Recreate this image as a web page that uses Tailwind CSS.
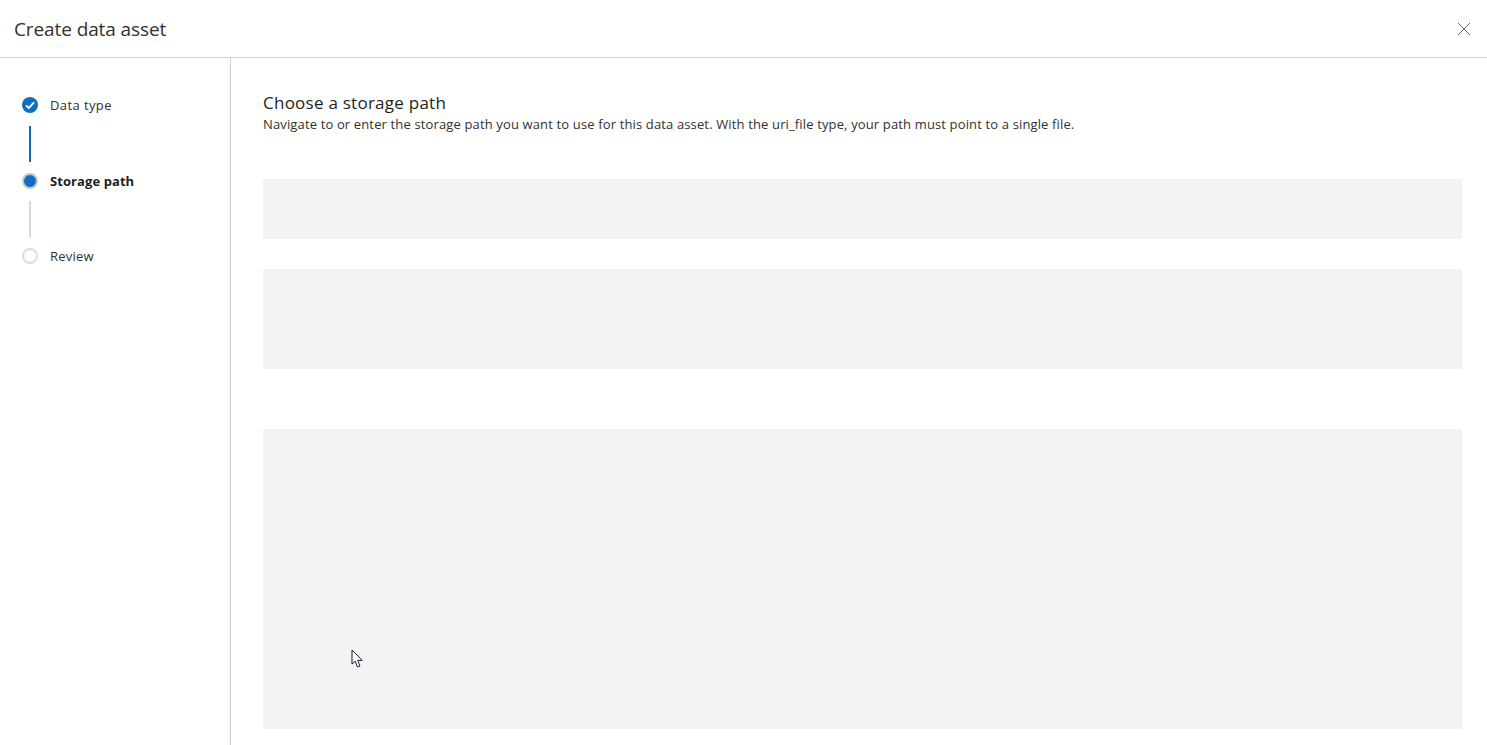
<!DOCTYPE html>
<html lang="en">
<head>
  <meta charset="UTF-8" />
  <title>Create data asset</title>
  <script src="https://cdn.jsdelivr.net/npm/@tailwindcss/browser@4"></script>
</head>
<body class="h-[745px] overflow-hidden bg-white font-['Open_Sans',sans-serif] text-[#201f1e]">

  <!-- Header -->
  <header class="h-[58px] flex items-center justify-between pl-[14px] pr-[16px] border-b border-[#d2d0ce]">
    <h1 class="text-[19px] pt-[1px] tracking-[-0.1px] text-[#323130]">Create data asset</h1>
    <svg class="w-[14px] h-[14px]" viewBox="0 0 14 14" fill="none" stroke="#605e5c" stroke-width="1">
      <path d="M1 1L13 13M13 1L1 13"/>
    </svg>
  </header>

  <div class="flex h-[687px]">
    <!-- Steps -->
    <nav class="w-[231px] shrink-0 border-r border-[#d2d0ce] pl-[22px] pt-[39px]">
      <div class="flex items-center h-[16px] gap-[12px]">
        <svg class="w-[16px] h-[16px]" viewBox="0 0 16 16">
          <circle cx="8" cy="8" r="8" fill="#106ebe"/>
          <path d="M4 8.3L6.8 11L12 5.4" fill="none" stroke="#fff" stroke-width="1.8"/>
        </svg>
        <span class="text-[13px] pt-[1px] tracking-[0.4px] text-[#323130]">Data type</span>
      </div>
      <div class="w-[2px] h-[36px] ml-[7px] mt-[13px] bg-[#106ebe]"></div>
      <div class="flex items-center h-[16px] gap-[12px] mt-[11px]">
        <span class="w-[16px] h-[16px] rounded-full bg-[#106ebe] border-2 border-[#c8c6c4]"></span>
        <span class="text-[13px] pt-[1px] font-bold tracking-[0.08px] text-[#201f1e]">Storage path</span>
      </div>
      <div class="w-[2px] h-[36px] ml-[7px] mt-[12px] bg-[#d9d8d6]"></div>
      <div class="flex items-center h-[16px] gap-[12px] mt-[11px]">
        <span class="w-[16px] h-[16px] rounded-full bg-white border-2 border-[#dedddb]"></span>
        <span class="text-[13px] pt-[1px] tracking-[0.2px] text-[#323130]">Review</span>
      </div>
    </nav>

    <!-- Main -->
    <main class="flex-1 pl-[32px] pr-[25px] pt-[34px]">
      <h2 class="text-[17px] leading-[22px] font-medium tracking-[0.25px] text-[#201f1e]">Choose a storage path</h2>
      <p class="text-[13px] leading-[18px] mt-[1px] tracking-[0.14px] text-[#323130]">Navigate to or enter the storage path you want to use for this data asset. With the uri_file type, your path must point to a single file.</p>
      <div class="h-[60px] mt-[46px] bg-[#f3f3f3]"></div>
      <div class="h-[100px] mt-[30px] bg-[#f3f3f3]"></div>
      <div class="h-[300px] mt-[60px] bg-[#f3f3f3]"></div>
    </main>
  </div>

  <!-- Mouse pointer -->
  <svg class="absolute left-[351px] top-[649px] w-[13px] h-[20px]" viewBox="0 0 13 20" fill="#fff" stroke="#1b1b30" stroke-width="1">
    <path d="M1 1V15L4.2 12.2L6.5 18L9 17L6.7 11.4H11.2Z"/>
  </svg>
</body>
</html>
